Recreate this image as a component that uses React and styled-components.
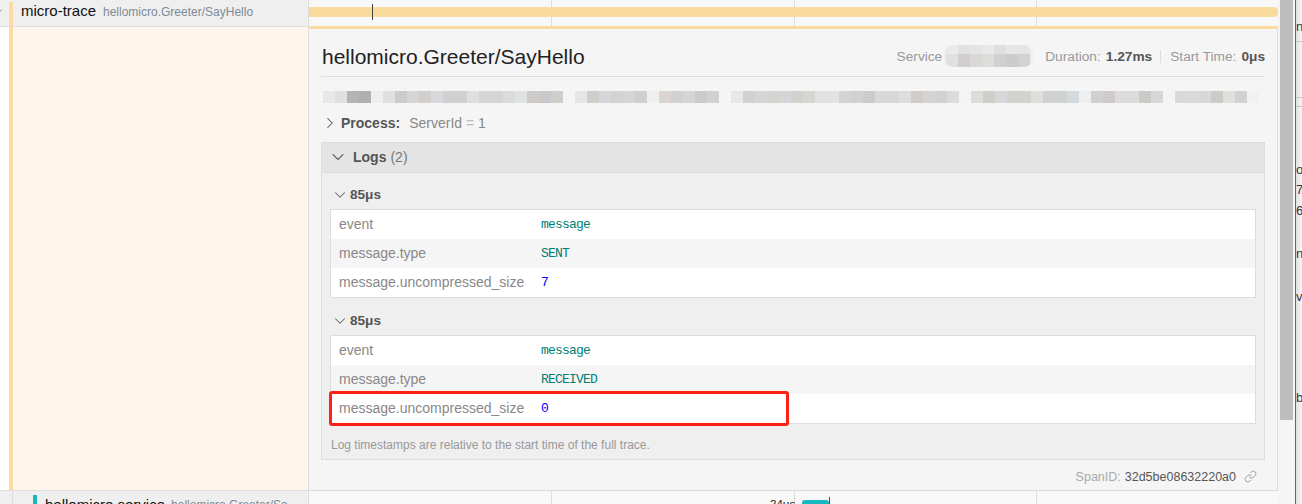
import React from 'react';
import styled, { createGlobalStyle } from 'styled-components';
import { ChevronDown, ChevronRight, Link as LinkIcon } from 'lucide-react';

const summaryCells = [
  'e8e8e8', 'e2dfe2', 'b6b4b2', 'aeafb0', 'eceef0', 'e0e0de', 'cbcbcb', 'd3d5d7', 'd2cecb', 'd7d9dc',
  'd0d0ce', 'd0d0ce', 'dfdfdf', 'd5d5d5', 'd5d5d3', 'd8dcdb', 'e1e3e2', 'cfcbc8', 'c8c9cb',
  'cfcecb', 'f4f4f4', 'e6e6e6', 'd1cdca', 'd6d6d8', 'd2d2d2', 'd3d5d6', 'cfcfcf', 'f0f0f0', 'dbd4d0',
  'cfd1d3', 'd4d6d3', 'cbcbcb', 'd1d1d3', 'f4f5f4', 'e8e8e8', 'd1d1d1', 'd6d6d6', 'd3d3d0', 'd4d5d7',
  'd3d1ce', 'd6d6d3', 'e2e2e4', 'e2e2e2', 'd3d5d2', 'd1d1cf', 'cdcbce', 'd5d9da', 'd8d8d8', 'dedede',
  'cfccc9', 'd4d4d2', 'd2d3d1', 'd9dcda', 'f4f4f4', 'dddcd9', 'cfcecb', 'd6d7db', 'd2d2cf', 'd2d2cf',
  'dfdeda', 'd0d2d1', 'd0d2d1', 'd4dadd', 'efefef', 'd0d0ce', 'cfcbca', 'dcdcdc', 'dddbd8', 'c9cbc8',
  'd6d7d9', 'f4f4f4', 'd9d9d9', 'd9dada', 'd6d7d6', 'cbcbc9', 'e0dfdc', 'd0d1d3', 'f1f1f1',
];

const serviceCells = [
  ['eaeaea', 'e2e2e2', 'e4e4e4', 'e8e8e8', 'dee0df', 'e6e6e6', 'e6e6e6'],
  ['e0e0df', 'd2cdcf', 'd8d8d6', 'dddddb', 'd0d0d2', 'cccccc', 'd2d2d2'],
];

const logGroups = [
  {
    id: 'sent',
    rows: [
      { key: 'event', value: 'message', kind: 'string' },
      { key: 'message.type', value: 'SENT', kind: 'string' },
      { key: 'message.uncompressed_size', value: '7', kind: 'number' },
    ],
  },
  {
    id: 'received',
    rows: [
      { key: 'event', value: 'message', kind: 'string' },
      { key: 'message.type', value: 'RECEIVED', kind: 'string' },
      { key: 'message.uncompressed_size', value: '0', kind: 'number', marked: true },
    ],
  },
];

const sideLines = [
  { height: 20, text: '' },
  { height: 22, text: 'ng', rule: true },
  { height: 56, text: '', rule: true },
  { height: 9, text: '', rule: true },
  { height: 56, text: '' },
  { height: 20, text: 'o' },
  { height: 21, text: '76' },
  { height: 43, text: '62' },
  { height: 43, text: 'na' },
  { height: 101, text: 'v' },
  { height: 20, text: 'b' },
];

function TimelineGrid({ children }) {
  return (
    <Timeline>
      <TimelineColumn />
      <TimelineColumn />
      <TimelineColumn />
      <TimelineColumn />
      {children}
    </Timeline>
  );
}

function LogGroup({ group }) {
  return (
    <GroupWrapper>
      <GroupHeader>
        <ChevronDown size={18} strokeWidth={1.4} />
        <span>85μs</span>
      </GroupHeader>
      <KeyValueTable>
        {group.rows.map((row) => (
          <KeyValueRow key={row.key}>
            <KeyCell>{row.key}</KeyCell>
            <ValueCell $kind={row.kind}>{row.value}</ValueCell>
            {row.marked && <RedMark />}
          </KeyValueRow>
        ))}
      </KeyValueTable>
    </GroupWrapper>
  );
}

export default function App() {
  return (
    <Page>
      <GlobalStyle />
      <Main>
        <TraceRow>
          <TraceLabel>
            <Collapse>
              <ChevronDown size={11} strokeWidth={1.5} />
            </Collapse>
            <SpanBar $color="#fbdba0" />
            <ServiceName>micro-trace</ServiceName>
            <OperationName>hellomicro.Greeter/SayHello</OperationName>
          </TraceLabel>
          <TimelineGrid>
            <WideBar />
            <TimeTick />
          </TimelineGrid>
        </TraceRow>

        <DetailRow>
          <DetailSide />
          <DetailPane>
            <DetailHeader>
              <Title>hellomicro.Greeter/SayHello</Title>
              <Overview>
                <Label>Service</Label>
                <ServiceMosaic>
                  {serviceCells.map((cells, rowIndex) => (
                    <MosaicLine key={rowIndex} $tall={rowIndex === 1}>
                      {cells.map((color, i) => (
                        <MosaicCell key={i} $color={color} />
                      ))}
                    </MosaicLine>
                  ))}
                </ServiceMosaic>
                <Label>Duration:</Label>
                <Strong>1.27ms</Strong>
                <Divider />
                <Label>Start Time:</Label>
                <Strong>0μs</Strong>
              </Overview>
            </DetailHeader>

            <SummaryMosaic>
              {summaryCells.map((color, i) => (
                <MosaicCell key={i} $color={color} />
              ))}
            </SummaryMosaic>

            <ProcessRow>
              <ChevronRight size={18} strokeWidth={1.4} />
              <ProcessTitle>Process:</ProcessTitle>
              <ProcessValue>
                ServerId <Equals>=</Equals> 1
              </ProcessValue>
            </ProcessRow>

            <LogsPanel>
              <LogsHeader>
                <ChevronDown size={20} strokeWidth={1.3} />
                <LogsTitle>Logs</LogsTitle>
                <LogsCount>(2)</LogsCount>
              </LogsHeader>
              <LogsBody>
                {logGroups.map((group) => (
                  <LogGroup key={group.id} group={group} />
                ))}
                <LogsNote>Log timestamps are relative to the start time of the full trace.</LogsNote>
              </LogsBody>
            </LogsPanel>

            <SpanFooter>
              <SpanLabel>SpanID:</SpanLabel>
              <SpanId>32d5be08632220a0</SpanId>
              <LinkIcon size={13} strokeWidth={1.2} color="#777" />
            </SpanFooter>
          </DetailPane>
        </DetailRow>

        <ChildRow>
          <ChildLabel>
            <SpanBar $color="#17b8be" />
            <ServiceName>hellomicro.service</ServiceName>
            <OperationName>hellomicro.Greeter/SayHello</OperationName>
          </ChildLabel>
          <TimelineGrid>
            <ChildDuration>24μs</ChildDuration>
            <ChildBar />
          </TimelineGrid>
        </ChildRow>
      </Main>

      <ScrollTrack>
        <ScrollThumb />
      </ScrollTrack>

      <NextWindow>
        {sideLines.map((line, i) => (
          <SideLine key={i} $height={line.height} $rule={line.rule}>
            {line.text}
          </SideLine>
        ))}
      </NextWindow>
    </Page>
  );
}

const GlobalStyle = createGlobalStyle`
  html, body {
    margin: 0;
    padding: 0;
    background: #fff;
    overflow: hidden;
  }
  body {
    font-family: "Liberation Sans", Arial, sans-serif;
  }
  * {
    box-sizing: border-box;
  }
`;

const Page = styled.div`
  display: flex;
  width: 1302px;
  height: 504px;
  overflow: hidden;
`;

const Main = styled.div`
  width: 1278px;
  flex: none;
  display: flex;
  flex-direction: column;
`;

const TraceRow = styled.div`
  display: flex;
  height: 26px;
  flex: none;
`;

const TraceLabel = styled.div`
  width: 309px;
  flex: none;
  display: flex;
  align-items: flex-end;
  background: #efefef;
  border-right: 1px solid #ddd;
  overflow: hidden;
  white-space: nowrap;
`;

const Collapse = styled.span`
  width: 9px;
  height: 24px;
  flex: none;
  display: flex;
  align-items: center;
  justify-content: flex-end;
  color: #555;
  overflow: hidden;
  svg {
    flex: none;
    margin-right: 5px;
    margin-top: -6px;
  }
`;

const SpanBar = styled.span`
  width: 4px;
  height: 24px;
  flex: none;
  background: ${(props) => props.$color};
  margin-right: 8px;
`;

const ServiceName = styled.span`
  flex: none;
  font-size: 15px;
  color: #111;
  line-height: 19px;
  margin-bottom: 6px;
`;

const OperationName = styled.span`
  font-size: 12px;
  color: #808a96;
  margin-left: 7px;
  line-height: 19px;
  margin-bottom: 4px;
`;

const Timeline = styled.div`
  position: relative;
  flex: 1;
  display: grid;
  grid-template-columns: repeat(4, 1fr);
  background: #f8f8f8;
`;

const TimelineColumn = styled.div`
  & + & {
    border-left: 1px solid #ddd;
  }
`;

const WideBar = styled.div`
  position: absolute;
  left: 0;
  right: 0;
  top: 7px;
  height: 10px;
  background: #fadb9e;
  border-radius: 0 4px 4px 0;
`;

const TimeTick = styled.div`
  position: absolute;
  left: 63px;
  top: 4px;
  width: 1px;
  height: 16px;
  background: #444;
`;

const DetailRow = styled.div`
  display: flex;
  height: 464px;
  flex: none;
`;

const DetailSide = styled.div`
  width: 309px;
  flex: none;
  background: linear-gradient(to right, #fff 9px, #fbdba0 9px, #fbdba0 13px, #fef6ea 13px);
  border-top: 1px solid #ddd;
  border-right: 1px solid #ddd;
`;

const DetailPane = styled.div`
  flex: 1;
  min-width: 0;
  display: flex;
  flex-direction: column;
  background: #f5f5f5;
  border-top: 3px solid #fadb9e;
  border-right: 1px solid #ddd;
  padding: 0 12px 0 12px;
`;

const DetailHeader = styled.div`
  height: 48px;
  flex: none;
  display: flex;
  align-items: center;
  justify-content: space-between;
  padding: 8px 0 0 1px;
  border-bottom: 1px solid #ddd;
`;

const Title = styled.h2`
  margin: 1px 0 0;
  font-size: 21px;
  font-weight: 400;
  color: #222;
`;

const Overview = styled.div`
  display: flex;
  align-items: center;
  font-size: 13.7px;
  color: #999;
`;

const Label = styled.span`
  color: #999;
`;

const Strong = styled.strong`
  color: #555;
  margin-left: 5px;
`;

const Divider = styled.span`
  width: 1px;
  height: 13px;
  background: #ddd;
  margin: 0 9px 0 8px;
`;

const ServiceMosaic = styled.div`
  width: 89px;
  height: 22px;
  margin: -2px 12px 0 2px;
  padding-left: 2px;
  border-radius: 9px;
  background: #eeeeee;
  overflow: hidden;
`;

const MosaicLine = styled.div`
  display: flex;
  height: ${(props) => (props.$tall ? '13px' : '9px')};
`;

const MosaicCell = styled.span`
  display: block;
  width: 12px;
  height: 100%;
  flex: none;
  background: #${(props) => props.$color};
`;

const SummaryMosaic = styled.div`
  display: flex;
  height: 12px;
  flex: none;
  margin: 14px 0 0 2px;
`;

const ProcessRow = styled.div`
  display: flex;
  align-items: center;
  height: 20px;
  flex: none;
  margin-top: 10px;
  color: #555;
`;

const ProcessTitle = styled.span`
  font-size: 14px;
  font-weight: 700;
  color: #555;
  margin-left: 2px;
`;

const ProcessValue = styled.span`
  font-size: 14px;
  color: #888;
  margin-left: 9px;
`;

const Equals = styled.span`
  color: #bbb;
`;

const LogsPanel = styled.section`
  height: 318px;
  flex: none;
  margin-top: 9px;
  border: 1px solid #ddd;
  background: #efefef;
  display: flex;
  flex-direction: column;
`;

const LogsHeader = styled.div`
  height: 30px;
  flex: none;
  display: flex;
  align-items: center;
  padding: 0 0 2px 6px;
  background: #e4e4e4;
  border-bottom: 1px solid #ddd;
  color: #666;
`;

const LogsTitle = styled.span`
  font-size: 14px;
  font-weight: 700;
  color: #555;
  margin-left: 5px;
`;

const LogsCount = styled.span`
  font-size: 14px;
  color: #777;
  margin-left: 4px;
`;

const LogsBody = styled.div`
  flex: 1;
  padding: 0 8px;
  display: flex;
  flex-direction: column;
`;

const GroupWrapper = styled.div`
  display: flex;
  flex-direction: column;
  & + & {
    margin-top: 1px;
  }
`;

const GroupHeader = styled.div`
  height: 36px;
  display: flex;
  align-items: center;
  padding: 7px 0 0 1px;
  color: #666;
  span {
    font-size: 13.6px;
    font-weight: 700;
    color: #555;
    margin-left: 1px;
  }
`;

const KeyValueTable = styled.div`
  border: 1px solid #ddd;
  background: #fff;
`;

const KeyValueRow = styled.div`
  position: relative;
  height: 29px;
  display: flex;
  align-items: center;
  &:nth-child(even) {
    background: #f5f5f5;
  }
`;

const KeyCell = styled.span`
  width: 210px;
  padding-left: 8px;
  flex: none;
  font-size: 14px;
  color: #888;
  margin-top: -2px;
`;

const ValueCell = styled.span`
  font-family: "Liberation Mono", "Courier New", monospace;
  font-size: 13px;
  letter-spacing: -0.8px;
  color: ${(props) => (props.$kind === 'number' ? '#0000ff' : '#008073')};
`;

const RedMark = styled.div`
  position: absolute;
  left: -2px;
  top: -3px;
  width: 460px;
  height: 35px;
  border: 3px solid #ff2016;
  border-radius: 3px;
`;

const LogsNote = styled.p`
  margin: 14px 0 0 1px;
  font-size: 12px;
  color: #999;
`;

const SpanFooter = styled.div`
  flex: 1;
  display: flex;
  align-items: center;
  justify-content: flex-end;
  padding: 3px 8px 0 0;
  font-size: 12.5px;
`;

const SpanLabel = styled.span`
  color: #aaa;
`;

const SpanId = styled.span`
  color: #555;
  margin: 0 8px 0 4px;
`;

const ChildRow = styled.div`
  display: flex;
  flex: 1;
  border-top: 1px solid #ddd;
`;

const ChildLabel = styled.div`
  width: 309px;
  flex: none;
  display: flex;
  background: #efefef;
  border-right: 1px solid #ddd;
  overflow: hidden;
  white-space: nowrap;
  padding: 0 20px 0 33px;
  position: relative;
  &::before {
    content: '';
    position: absolute;
    left: 12px;
    top: 0;
    bottom: 0;
    width: 1px;
    background: #ddd;
  }
  ${SpanBar} {
    margin-top: 4px;
  }
  ${ServiceName} {
    margin-top: 4px;
    margin-bottom: 0;
  }
  ${OperationName} {
    margin: 5px 0 0 6px;
    overflow: hidden;
  }
`;

const ChildDuration = styled.span`
  position: absolute;
  left: 461px;
  top: 7px;
  font-size: 11.5px;
  color: #222;
`;

const ChildBar = styled.div`
  position: absolute;
  left: 493px;
  top: 9px;
  width: 27px;
  height: 10px;
  background: #17b8be;
  border-radius: 3px 3px 0 0;
  &::after {
    content: '';
    position: absolute;
    right: -1px;
    top: -3px;
    bottom: 0;
    width: 1px;
    background: #555;
  }
`;

const ScrollTrack = styled.div`
  width: 17px;
  flex: none;
  padding-left: 2px;
  background: #f5f5f5;
`;

const ScrollThumb = styled.div`
  width: 13px;
  height: 420px;
  background: #bdbdbd;
`;

const NextWindow = styled.div`
  flex: 1;
  min-width: 0;
  display: flex;
  flex-direction: column;
  background: linear-gradient(to right, #e2e2e2, #f6f6f6);
  border-left: 1px solid #666;
  overflow: hidden;
`;

const SideLine = styled.div`
  height: ${(props) => props.$height}px;
  flex: none;
  font-size: 13px;
  line-height: 14px;
  color: #334;
  white-space: nowrap;
  border-bottom: ${(props) => (props.$rule ? '1px solid #c4c8cc' : '0')};
`;
